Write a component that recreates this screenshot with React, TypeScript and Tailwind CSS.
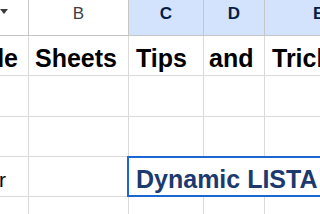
import React from "react";

const font = { fontFamily: '"Liberation Sans", Arial, sans-serif' };

const cell = "shrink-0 border-r border-b border-[#dadada] flex items-end overflow-visible whitespace-nowrap";
const big = "pb-[3px] text-[25px] leading-[28px] font-bold";

const Row = ({ h, children }: { h: string; children: React.ReactNode }) => (
  <div className={`flex ${h}`}>{children}</div>
);

export default function App() {
  return (
    <div className="w-[320px] h-[214px] overflow-hidden bg-white text-black" style={font}>
      {/* column headers */}
      <div className="flex h-[36px]">
        <div className="w-[29px] shrink-0 border-r border-b border-[#c4c7c5] relative">
          <div className="absolute left-0 top-[9px] w-0 h-0 border-l-[4px] border-r-[4px] border-t-[5px] border-l-transparent border-r-transparent border-t-[#3c3c3c]" />
        </div>
        <div className="w-[100px] shrink-0 border-r border-b border-[#c4c7c5] flex justify-center pt-[4px] text-[17px] leading-[20px] text-[#3c4043]">
          B
        </div>
        <div className="w-[75px] shrink-0 border-r border-b border-[#c4c7c5] bg-[#d3e3fd] flex justify-center pt-[4px] text-[17px] leading-[20px] font-bold text-[#041e49]">
          C
        </div>
        <div className="w-[61px] shrink-0 border-r border-b border-[#c4c7c5] bg-[#d3e3fd] flex justify-center pt-[4px] text-[17px] leading-[20px] font-bold text-[#041e49]">
          D
        </div>
        <div className="flex-1 border-b border-[#c4c7c5] bg-[#d3e3fd] flex pl-[48px] pt-[4px] text-[17px] leading-[20px] font-bold text-[#041e49]">
          E
        </div>
      </div>

      {/* row 1 */}
      <Row h="h-[40px]">
        <div className={`${cell} w-[29px] justify-end pr-[10px] ${big}`}>le</div>
        <div className={`${cell} w-[100px] pl-[6px] ${big}`}>Sheets</div>
        <div className={`${cell} w-[75px] pl-[7px] ${big}`}>Tips</div>
        <div className={`${cell} w-[61px] pl-[5px] ${big}`}>and</div>
        <div className={`${cell} flex-1 border-r-0 pl-[7px] ${big}`}>Tricks</div>
      </Row>

      {/* row 2 */}
      <Row h="h-[41px]">
        <div className={`${cell} w-[29px]`} />
        <div className={`${cell} w-[100px]`} />
        <div className={`${cell} w-[75px]`} />
        <div className={`${cell} w-[61px]`} />
        <div className={`${cell} flex-1 border-r-0`} />
      </Row>

      {/* row 3 */}
      <Row h="h-[40px]">
        <div className={`${cell} w-[29px]`} />
        <div className={`${cell} w-[100px]`} />
        <div className={`${cell} w-[75px]`} />
        <div className={`${cell} w-[61px]`} />
        <div className={`${cell} flex-1 border-r-0`} />
      </Row>

      {/* row 4 */}
      <Row h="h-[40px]">
        <div className={`${cell} w-[29px] justify-end pr-[22px] pb-[4px] text-[21px] leading-[24px]`}>r</div>
        <div className={`${cell} w-[100px]`} />
        <div className={`flex-1 relative border-b border-[#dadada] flex items-end pl-[7px] ${big} text-[#1c3a70] whitespace-nowrap`}>
          Dynamic LISTA
          <div className="absolute -left-[2px] -top-[1px] -right-[2px] -bottom-[1px] border-2 border-[#1a66d2]" />
        </div>
      </Row>

      {/* row 5 */}
      <Row h="h-[41px]">
        <div className={`${cell} w-[29px]`} />
        <div className={`${cell} w-[100px]`} />
        <div className={`${cell} w-[75px]`} />
        <div className={`${cell} w-[61px]`} />
        <div className={`${cell} flex-1 border-r-0`} />
      </Row>
    </div>
  );
}
